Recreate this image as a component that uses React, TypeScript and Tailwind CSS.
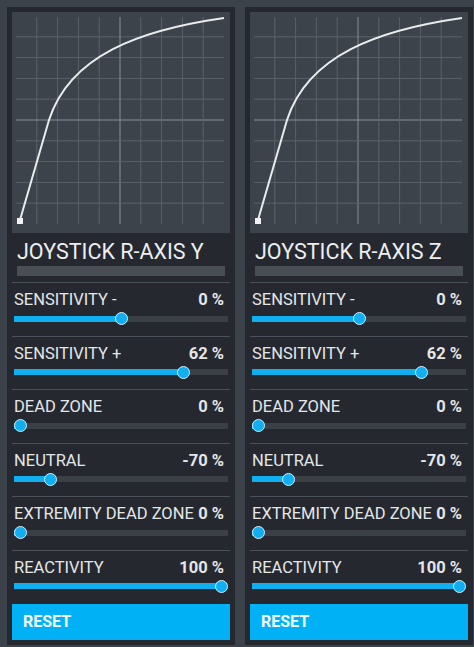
import React from "react";

type Setting = { label: string; value: string; pos: number };

const settings: Setting[] = [
  { label: "SENSITIVITY -", value: "0 %", pos: 0.5 },
  { label: "SENSITIVITY +", value: "62 %", pos: 0.81 },
  { label: "DEAD ZONE", value: "0 %", pos: 0 },
  { label: "NEUTRAL", value: "-70 %", pos: 0.15 },
  { label: "EXTREMITY DEAD ZONE", value: "0 %", pos: 0 },
  { label: "REACTIVITY", value: "100 %", pos: 1 },
];

function CurveGraph() {
  const ticks = [1, 2, 3, 4, 5, 6, 7, 8, 9].map((k) => 4 + k * 20.8);
  return (
    <div className="h-[221px] w-full bg-[#3c434a]">
      <svg viewBox="0 0 218 221" className="h-full w-full">
        {ticks.map((t, i) => (
          <g key={t} stroke={i === 4 ? "#8a9096" : "#5a6168"} strokeWidth={1}>
            <line x1={t} y1={5} x2={t} y2={212} />
            <line x1={4} y1={t} x2={212} y2={t} />
          </g>
        ))}
        <path
          d="M8 208 L37 108 C58 43 128 18 212 6"
          fill="none"
          stroke="#e9ebec"
          strokeWidth={2}
        />
        <rect x={5} y={206} width={6} height={6} fill="#f2f2f2" />
      </svg>
    </div>
  );
}

function SliderRow({ s, last }: { s: Setting; last: boolean }) {
  return (
    <div className={`border-t border-[#4b5158] pt-[9px] ${last ? "h-[54px]" : "h-[53.5px]"}`}>
      <div className="flex items-center justify-between pl-[2px] pr-[6px] text-[16.5px] leading-none text-[#e4e6e8]">
        <span>{s.label}</span>
        <span className="font-bold">{s.value}</span>
      </div>
      <div className="relative mx-[2px] mt-[3px] h-[14px]">
        <div className="absolute left-0 right-0 top-[4px] h-[6px] bg-[#3b4047]" />
        <div
          className="absolute left-0 top-[4px] h-[6px] bg-[#11aef0]"
          style={{ width: `calc(${s.pos} * (100% - 13px) + 6.5px)` }}
        />
        <div
          className="absolute top-[0.5px] h-[13px] w-[13px] rounded-full border border-[#cfeefc] bg-[#12aef0]"
          style={{ left: `calc(${s.pos} * (100% - 13px))` }}
        />
      </div>
    </div>
  );
}

function AxisPanel({ title }: { title: string }) {
  return (
    <div className="flex w-[228px] flex-col bg-[#25292f] p-[5px]">
      <CurveGraph />
      <div className="h-[49px] px-[5px] pt-[8px]">
        <div className="text-[21.5px] leading-none text-[#eceef0]">{title}</div>
        <div className="mt-[3.5px] h-[10px] bg-[#4a4f55]" />
      </div>
      {settings.map((s, i) => (
        <SliderRow key={s.label} s={s} last={i === settings.length - 1} />
      ))}
      <button className="flex h-[36px] items-center bg-[#00b2f5] pl-[11px] text-[16px] font-bold text-[#f4fbff]">
        RESET
      </button>
    </div>
  );
}

export default function App() {
  return (
    <main
      className="flex min-h-[647px] gap-[10px] bg-[#3b4249] pl-[7px] pt-[7px]"
      style={{ fontFamily: "Roboto, 'Noto Sans', sans-serif" }}
    >
      <div className="flex items-start gap-[10px]">
        <AxisPanel title="JOYSTICK R-AXIS Y" />
        <AxisPanel title="JOYSTICK R-AXIS Z" />
      </div>
    </main>
  );
}
